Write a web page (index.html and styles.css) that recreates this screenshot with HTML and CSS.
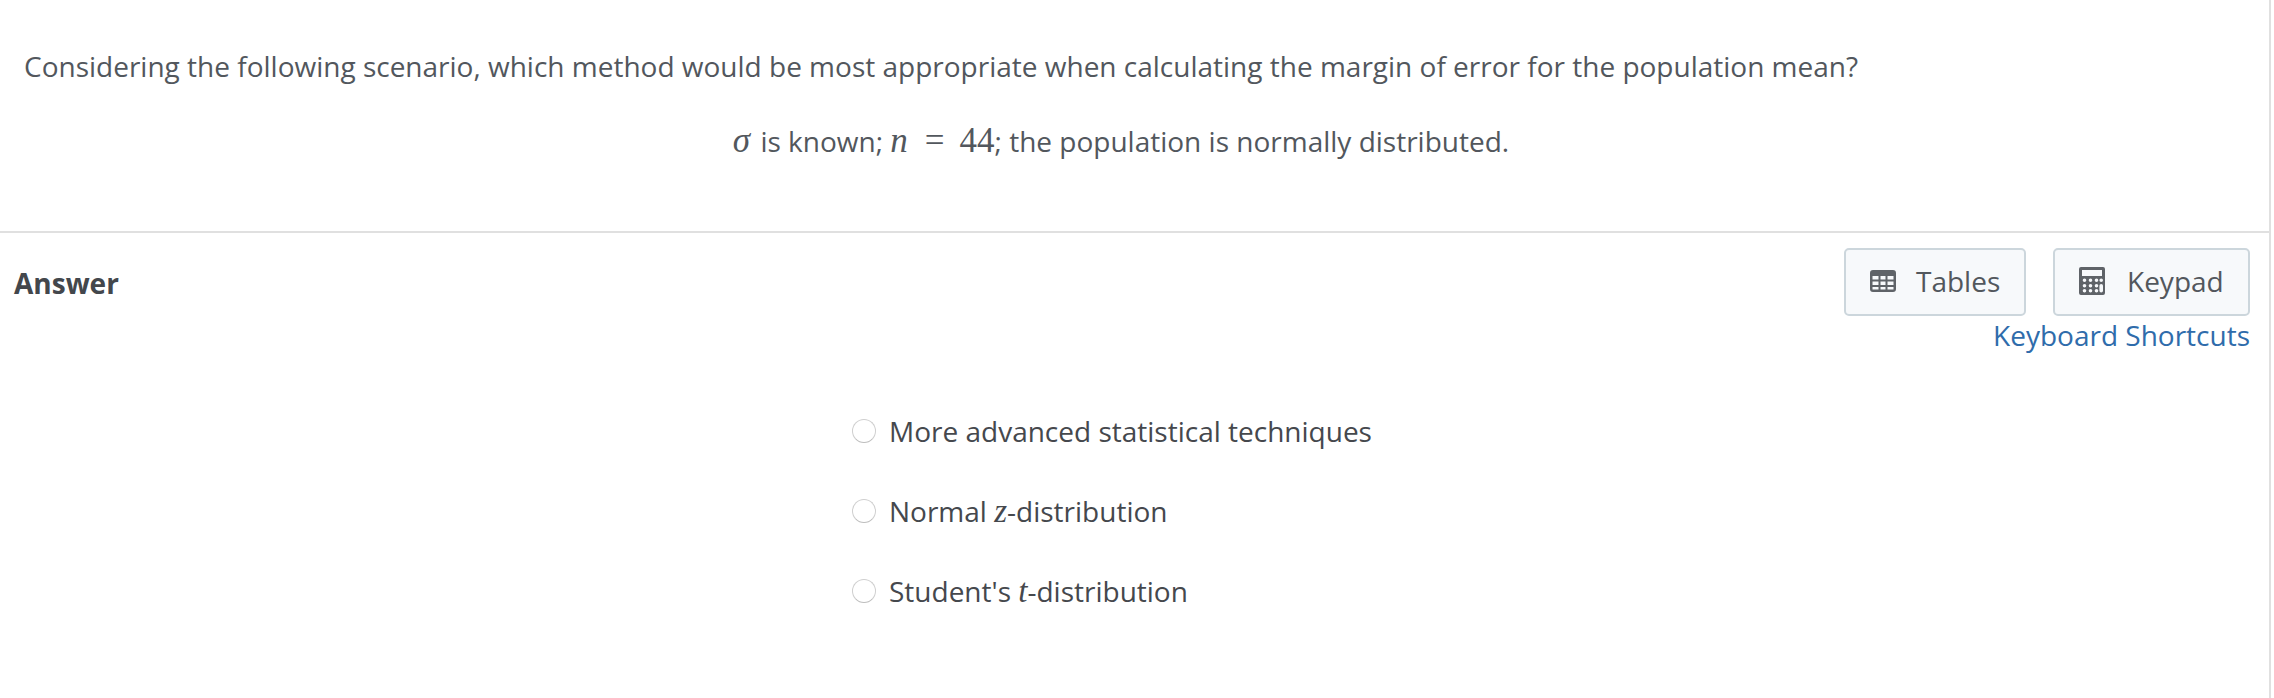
FILE: index.html
```html
<!DOCTYPE html>
<html lang="en">
<head>
<meta charset="utf-8">
<title>Question</title>
<link rel="stylesheet" href="styles.css">
</head>
<body>
<main class="page">
  <section class="question">
    <p class="stem">Considering the following scenario, which method would be most appropriate when calculating the margin of error for the population mean?</p>
    <p class="scenario"><i class="math math-xl math-sigma">σ</i> is known; <i class="math math-xl">n</i><span class="eq">=</span><span class="num">44</span>; the population is normally distributed.</p>
  </section>
  <section class="answer">
    <div class="answer-head">
      <h2 class="answer-title">Answer</h2>
      <div class="tools">
        <div class="tool-buttons">
          <button class="tool tool-tables" type="button">
            <svg class="tool-icon" viewBox="0 0 26 22" aria-hidden="true"><path fill-rule="evenodd" d="M3 0h20a3 3 0 0 1 3 3v16a3 3 0 0 1-3 3H3a3 3 0 0 1-3-3V3a3 3 0 0 1 3-3zM2.500 6v3.500h6V6zm8 0v3.500h5V6zm7 0v3.500h6V6zm-15 5.500V15h6v-3.500zm8 0V15h5v-3.500zm7 0V15h6v-3.500zm-15 5.500v2.500h6V17zm8 0v2.500h5V17zm7 0v2.500h6V17z"/></svg>
            <span>Tables</span>
          </button>
          <button class="tool tool-keypad" type="button">
            <svg class="tool-icon tool-icon-calc" viewBox="0 0 26 28" aria-hidden="true"><path fill-rule="evenodd" d="M2 0h22a2 2 0 0 1 2 2v24a2 2 0 0 1-2 2H2a2 2 0 0 1-2-2V2a2 2 0 0 1 2-2zM3 3v6h20V3zM5.500 11.500a1.800 1.800 0 1 0 0 3.600 1.800 1.800 0 0 0 0-3.600zm6 0a1.800 1.800 0 1 0 0 3.600 1.800 1.800 0 0 0 0-3.600zm6 0a1.800 1.800 0 1 0 0 3.600 1.800 1.800 0 0 0 0-3.600zm4.700 0a1.800 1.800 0 1 0 0 3.600 1.800 1.800 0 0 0 0-3.600zM5.500 17a1.800 1.800 0 1 0 0 3.600 1.800 1.800 0 0 0 0-3.600zm6 0a1.800 1.800 0 1 0 0 3.600 1.800 1.800 0 0 0 0-3.600zm6 0a1.800 1.800 0 1 0 0 3.600 1.800 1.800 0 0 0 0-3.600zM5.500 22a1.800 1.800 0 1 0 0 3.600 1.800 1.800 0 0 0 0-3.600zm6 0a1.800 1.800 0 1 0 0 3.600 1.800 1.800 0 0 0 0-3.600zm6 0a1.800 1.800 0 1 0 0 3.600 1.800 1.800 0 0 0 0-3.600zM22.200 17a1.800 1.800 0 0 0-1.800 1.800v5a1.800 1.800 0 0 0 3.600 0v-5a1.800 1.800 0 0 0-1.800-1.800z"/></svg>
            <span>Keypad</span>
          </button>
        </div>
        <a class="shortcuts" href="#">Keyboard Shortcuts</a>
      </div>
    </div>
    <ul class="choices">
      <li class="choice"><span class="radio"></span><span>More advanced statistical techniques</span></li>
      <li class="choice"><span class="radio"></span><span>Normal <i class="math math-lg">z</i>-distribution</span></li>
      <li class="choice"><span class="radio"></span><span>Student's <i class="math math-lg">t</i>-distribution</span></li>
    </ul>
  </section>
</main>
</body>
</html>
```
FILE: styles.css
```css
* { box-sizing: border-box; }
html, body { margin: 0; padding: 0; background: #fff; }
body {
  width: 2274px;
  height: 698px;
  overflow: hidden;
  font-family: "Open Sans", "Liberation Sans", sans-serif;
  font-size: 28px;
  line-height: 40px;
  color: #52575d;
}
.page {
  height: 698px;
  border-right: 2px solid #e0e0e0;
  margin-right: 3px;
}
.question {
  height: 233px;
  padding: 46px 0 0 24px;
  border-bottom: 2px solid #e0e0e0;
}
.stem { margin: 0; }
.scenario {
  margin: 35px 0 0;
  text-align: center;
  padding-right: 51px;
}
.math { font-family: "Liberation Serif", serif; font-style: italic; }
.math-lg { font-size: 33px; line-height: 1; }
.math-xl { font-size: 35px; line-height: 1; }
.math-sigma { margin-right: 3px; }
.eq { font-family: "Liberation Serif", serif; font-size: 35px; line-height: 1; margin: 0 15px 0 17px; }
.num { font-family: "Liberation Serif", serif; font-size: 35px; line-height: 1; }
.answer { padding: 15px 19px 0 14px; }
.answer-head { display: flex; justify-content: space-between; align-items: flex-start; }
.answer-title {
  margin: 15px 0 0;
  font-size: 28px;
  line-height: 40px;
  font-weight: 700;
  color: #43474c;
}
.tools { display: flex; flex-direction: column; align-items: flex-end; }
.tool-buttons { display: flex; gap: 27px; }
.tool {
  display: flex;
  align-items: center;
  height: 68px;
  padding: 0 0 2px;
  font: inherit;
  color: inherit;
  background: #f7f9fb;
  border: 2px solid #ccd6dc;
  border-radius: 5px;
}
.tool-tables { width: 182px; padding-left: 24px; gap: 20px; }
.tool-keypad { width: 197px; padding-left: 24px; gap: 22px; }
.tool-icon { width: 26px; height: 22px; fill: #5f6368; flex: none; }
.tool-icon-calc { height: 28px; }
.shortcuts { color: #2f6cab; text-decoration: none; margin-top: -1px; }
.choices { list-style: none; margin: 36px 0 0; padding: 0 0 0 838px; }
.choice { display: flex; align-items: center; gap: 13px; height: 80px; color: #45484d; }
.radio {
  width: 24px;
  height: 24px;
  border-radius: 50%;
  background: #fff;
  border: 1.500px solid #cfcfcf;
  border-bottom-color: #bdbdbd;
  flex: none;
}
```
